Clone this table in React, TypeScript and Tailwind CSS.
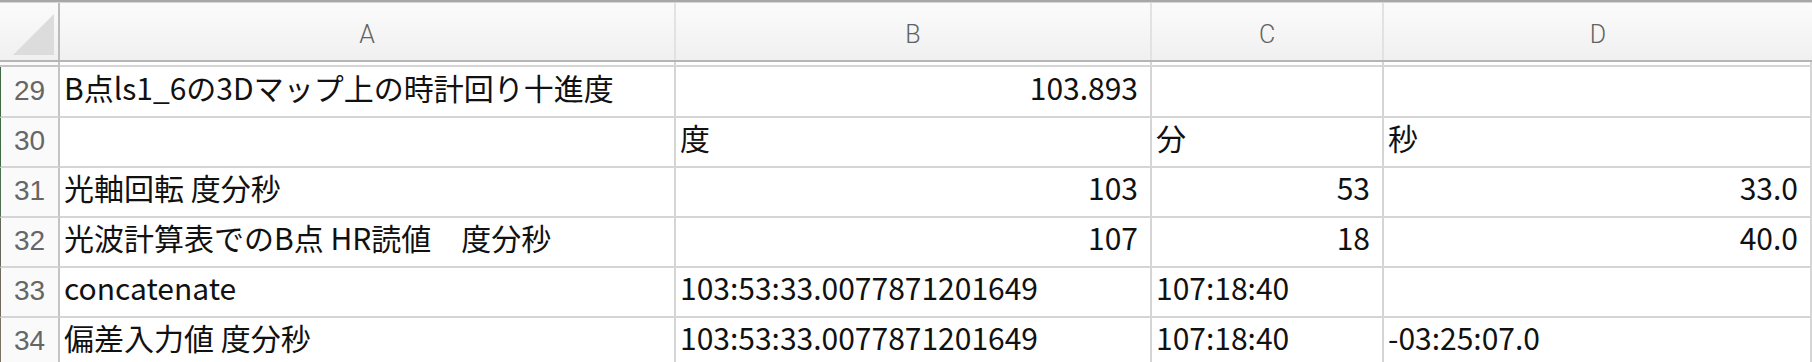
import React from 'react';

type Row = {
  n: number;
  a: string;
  b: string;
  c: string;
  d: string;
  num?: boolean; // right-aligned numeric cells in B..D
  edge: string;
  h: string;
};

const rows: Row[] = [
  { n: 29, a: 'B点ls1_6の3Dマップ上の時計回り十進度', b: '103.893', c: '', d: '', num: true, edge: 'border-l-[#3d6a43]', h: 'h-[51px]' },
  { n: 30, a: '', b: '度', c: '分', d: '秒', edge: 'border-l-[#3f6b44]', h: 'h-[50px]' },
  { n: 31, a: '光軸回転 度分秒', b: '103', c: '53', d: '33.0', num: true, edge: 'border-l-[#4f6f52]', h: 'h-[50px]' },
  { n: 32, a: '光波計算表でのB点 HR読値　度分秒', b: '107', c: '18', d: '40.0', num: true, edge: 'border-l-[#66665c]', h: 'h-[50px]' },
  { n: 33, a: 'concatenate', b: '103:53:33.0077871201649', c: '107:18:40', d: '', edge: 'border-l-[#6e6a5e]', h: 'h-[50px]' },
  { n: 34, a: '偏差入力値 度分秒', b: '103:53:33.0077871201649', c: '107:18:40', d: '-03:25:07.0', edge: 'border-l-[#7a7262]', h: 'h-[50px]' },
];

const cols = 'grid grid-cols-[60px_616px_476px_232px_428px]';
const cellFont = "font-['Noto_Sans_CJK_JP','Noto_Sans',sans-serif]";

function Cell({ text, right }: { text: string; right?: boolean }) {
  return (
    <div
      className={`flex h-full items-end border-r-2 border-b-2 border-[#d5d5d5] bg-white pb-[12px] text-[30px] leading-[34px] text-[#111] whitespace-nowrap ${cellFont} ${
        right ? 'justify-end pr-[12px]' : 'justify-start pl-[4px]'
      }`}
    >
      {text}
    </div>
  );
}

function ColHead({ label, last }: { label: string; last?: boolean }) {
  return (
    <div
      className={`flex justify-center pt-[17px] text-[25px] leading-[29px] font-light text-[#626262] font-['Roboto',sans-serif] ${
        last ? '' : 'border-r-2 border-[#e2e2e2]'
      }`}
    >
      {label}
    </div>
  );
}

export default function App() {
  return (
    <div className="w-[1812px] h-[362px] overflow-hidden bg-white">
      {/* window top edge */}
      <div className="h-[2px] bg-[#a7a7a7]" />
      <div className="h-[1px] bg-[#d6d6d6]" />

      {/* column header */}
      <div className={`${cols} h-[59px] border-b-2 border-[#b5b5b5] bg-gradient-to-b from-[#fbfbfb] to-[#f0f0f0]`}>
        <div className="border-r-2 border-[#bcbcbc] pl-[13px] pt-[11px]">
          <svg width="41" height="41" viewBox="0 0 41 41">
            <polygon points="41,0 41,41 0,41" fill="#dcdcdc" />
          </svg>
        </div>
        <ColHead label="A" />
        <ColHead label="B" />
        <ColHead label="C" />
        <ColHead label="D" last />
      </div>

      {/* frozen pane split */}
      <div className={`${cols} h-[5px]`}>
        <div className="border-r-2 border-b-2 border-[#c4c4c4] bg-[#fafafa]" />
        <div className="border-r-2 border-b-2 border-[#d5d5d5]" />
        <div className="border-r-2 border-b-2 border-[#d5d5d5]" />
        <div className="border-r-2 border-b-2 border-[#d5d5d5]" />
        <div className="border-r-2 border-b-2 border-[#d5d5d5]" />
      </div>

      {rows.map((r) => (
        <div key={r.n} className={`${cols} ${r.h}`}>
          <div
            className={`flex h-full items-end justify-center border-l-[1px] ${r.edge} border-r-2 border-r-[#c4c4c4] border-b-2 border-b-[#d5d5d5] bg-[#fafafa] pb-[9px] text-[28px] leading-[32px] text-[#666] font-['Liberation_Sans',Arial,sans-serif]`}
          >
            {r.n}
          </div>
          <Cell text={r.a} />
          <Cell text={r.b} right={r.num} />
          <Cell text={r.c} right={r.num} />
          <Cell text={r.d} right={r.num} />
        </div>
      ))}
    </div>
  );
}
